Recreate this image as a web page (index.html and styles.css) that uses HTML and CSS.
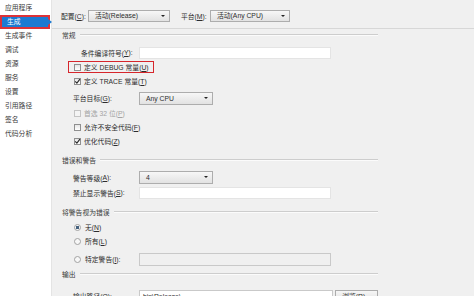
FILE: index.html
```html
<!DOCTYPE html>
<html lang="zh-CN">
<head>
  <meta charset="UTF-8">
  <title>项目属性 - 生成</title>
  <link rel="stylesheet" href="styles.css">
</head>
<body>

  <div class="window">
    <nav class="tabs">
      <div class="tab">应用程序</div>
      <div class="tab active">生成</div>
      <div class="tab">生成事件</div>
      <div class="tab">调试</div>
      <div class="tab">资源</div>
      <div class="tab">服务</div>
      <div class="tab">设置</div>
      <div class="tab">引用路径</div>
      <div class="tab">签名</div>
      <div class="tab">代码分析</div>
    </nav>

    <div class="page">
      <div class="toolbar">
        <label class="config-label">配置(<u>C</u>):</label>
        <div class="combo combo-config">活动(Release)<span class="caret"></span></div>
        <label class="platform-label">平台(<u>M</u>):</label>
        <div class="combo combo-platform">活动(Any CPU)<span class="caret"></span></div>
      </div>

      <div class="content">
        <div class="group-title">常规</div>
        <div class="group group-general">
          <div class="row field">
            <label class="label label-wide">条件编译符号(<u>Y</u>):</label>
            <div class="textbox"></div>
          </div>
          <div class="row">
            <span class="highlight"><span class="box"></span>定义 DEBUG 常量(<u>U</u>)</span>
          </div>
          <div class="row">
            <span class="box checked"><svg viewBox="0 0 7 7"><path d="M1.2 3.4 L2.9 5.2 L5.9 1.2"/></svg></span>定义 TRACE 常量(<u>T</u>)
          </div>
          <div class="row field field-tall">
            <label class="label">平台目标(<u>G</u>):</label>
            <div class="combo combo-small">Any CPU<span class="caret"></span></div>
          </div>
          <div class="row disabled">
            <span class="box"></span>首选 32 位(<u>P</u>)
          </div>
          <div class="row">
            <span class="box"></span>允许不安全代码(<u>F</u>)
          </div>
          <div class="row">
            <span class="box checked"><svg viewBox="0 0 7 7"><path d="M1.2 3.4 L2.9 5.2 L5.9 1.2"/></svg></span>优化代码(<u>Z</u>)
          </div>
        </div>

        <div class="group-title">错误和警告</div>
        <div class="group">
          <div class="row field">
            <label class="label">警告等级(<u>A</u>):</label>
            <div class="combo combo-small">4<span class="caret"></span></div>
          </div>
          <div class="row field">
            <label class="label">禁止显示警告(<u>S</u>):</label>
            <div class="textbox"></div>
          </div>
        </div>

        <div class="group-title">将警告视为错误</div>
        <div class="group group-radios">
          <div class="row">
            <span class="radio selected"></span>无(<u>N</u>)
          </div>
          <div class="row">
            <span class="radio"></span>所有(<u>L</u>)
          </div>
          <div class="row field field-tall specific">
            <label class="label"><span class="radio"></span>特定警告(<u>I</u>):</label>
            <div class="textbox textbox-disabled"></div>
          </div>
        </div>

        <div class="group-title">输出</div>
        <div class="group group-output">
          <div class="row field field-tall">
            <label class="label">输出路径(<u>O</u>):</label>
            <div class="textbox textbox-path">bin\Release\</div>
            <button class="browse">浏览(<u>R</u>)...</button>
          </div>
        </div>
      </div>
    </div>
  </div>

</body>
</html>
```

FILE: styles.css
```css
* {
  box-sizing: border-box;
}

body {
  margin: 0;
  font-family: "Liberation Sans", "Noto Sans CJK SC", sans-serif;
  font-size: 6.8px;
  color: #2c2c2c;
  background: #f0f0f0;
}

u {
  text-decoration: underline;
  text-underline-offset: 1px;
}

.window {
  display: flex;
  width: 474px;
  height: 296px;
  overflow: hidden;
}

/* left tab strip */
.tabs {
  width: 52px;
  flex-shrink: 0;
  background: #ffffff;
  padding-top: 1px;
  border-right: 1px solid #e4e4e4;
}

.tab {
  height: 14px;
  line-height: 14px;
  padding-left: 5px;
  white-space: nowrap;
  color: #3a3a3a;
}

.tab.active {
  position: relative;
  width: 50px;
  background: #1c7ad2;
  color: #ffffff;
  border: 2px solid #dc3238;
  line-height: 10px;
  padding-left: 5px;
}

.tab.active::after {
  content: "";
  position: absolute;
  left: 100%;
  top: 2px;
  border-top: 3px solid transparent;
  border-bottom: 3px solid transparent;
  border-left: 4px solid #1c7ad2;
}

/* right page */
.page {
  flex: 1;
}

.toolbar {
  display: flex;
  align-items: center;
  height: 29px;
  padding: 3px 0 0 9px;
  border-bottom: 1px solid #d7d7d7;
}

.toolbar label {
  white-space: nowrap;
}

.config-label {
  width: 27px;
}

.platform-label {
  width: 29px;
  margin-left: 11px;
}

.combo {
  position: relative;
  height: 12px;
  line-height: 10px;
  padding-left: 6px;
  border: 1px solid #adadad;
  background: linear-gradient(#f7f7f7, #e2e2e2);
  white-space: nowrap;
}

.caret {
  position: absolute;
  right: 4px;
  top: 4px;
  border-left: 2px solid transparent;
  border-right: 2px solid transparent;
  border-top: 2px solid #222222;
}

.combo-config {
  width: 82px;
}

.combo-platform {
  width: 80px;
}

.combo-small {
  width: 74px;
  height: 13px;
  line-height: 11px;
}

.content {
  width: 326px;
  padding-left: 10px;
}

.group-title {
  display: flex;
  align-items: center;
  height: 12px;
  color: #3a3a3a;
}

.group-title::after {
  content: "";
  flex: 1;
  margin-left: 4px;
  border-top: 1px solid #cdcdcd;
  border-bottom: 1px solid #fbfbfb;
}

.group {
  padding: 4px 0 6px 11px;
}

.group-radios {
  padding: 2px 0 1px 11px;
}

.group-output {
  padding-top: 6px;
}

.row {
  display: flex;
  align-items: center;
  height: 14px;
  white-space: nowrap;
}

.row.field {
  height: 15px;
}

.row.field-tall {
  height: 16px;
  margin-top: 2px;
}

.row.specific {
  margin-top: 3px;
}

.label {
  display: flex;
  align-items: center;
  width: 66px;
  flex-shrink: 0;
}

.label-wide {
  padding-left: 8px;
}

.textbox {
  width: 192px;
  height: 12px;
  background: #ffffff;
  border: 1px solid #e4e4e4;
}

.textbox-disabled {
  height: 13px;
  background: #f0f0f0;
  border-color: #c9c9c9;
}

.textbox-path {
  width: 194px;
  height: 13px;
  line-height: 11px;
  padding-left: 3px;
  border-color: #c9c9c9;
}

.browse {
  width: 43px;
  height: 13px;
  margin-left: 2px;
  padding: 0;
  font: inherit;
  color: #2c2c2c;
  border: 1px solid #acacac;
  background: linear-gradient(#f6f6f6, #e0e0e0);
}

.box {
  display: inline-block;
  width: 7px;
  height: 7px;
  margin: 0 3px 0 1px;
  border: 1px solid #8f8f8f;
  background: linear-gradient(#e6e6e6, #ffffff);
  flex-shrink: 0;
}

.box svg {
  display: block;
  width: 7px;
  height: 7px;
  margin: -1px 0 0 -1px;
}

.box path {
  fill: none;
  stroke: #2a2a2a;
  stroke-width: 1.1;
}

.disabled {
  color: #a3a3a3;
}

.disabled .box {
  border-color: #c4c4c4;
  background: #f4f4f4;
}

.highlight {
  display: flex;
  align-items: center;
  height: 12px;
  margin-left: -5px;
  padding: 0 4px;
  border: 1px solid #d6262c;
}

.radio {
  display: inline-block;
  width: 7px;
  height: 7px;
  margin: 0 4px 0 1px;
  border-radius: 50%;
  border: 1px solid #a2a2a2;
  background: #f7f7f7;
  flex-shrink: 0;
}

.radio.selected {
  background: radial-gradient(circle, #46627f 0 1.6px, #f7f7f7 2px);
}
```
